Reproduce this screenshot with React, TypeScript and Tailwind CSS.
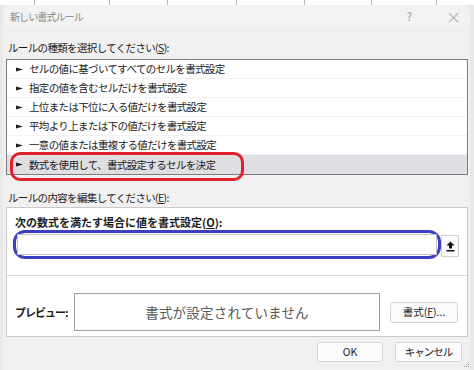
import React from 'react';

const rules = [
  'セルの値に基づいてすべてのセルを書式設定',
  '指定の値を含むセルだけを書式設定',
  '上位または下位に入る値だけを書式設定',
  '平均より上または下の値だけを書式設定',
  '一意の値または重複する値だけを書式設定',
  '数式を使用して、書式設定するセルを決定',
];

const colWidths = [35, 75, 58, 69, 68, 67, 65];

const Arrow = () => (
  <svg width="7" height="5" viewBox="0 0 7 5" className="shrink-0">
    <polygon points="0,0.5 7,2.5 0,4.5" fill="#1f1f1f" />
  </svg>
);

export default function App() {
  return (
    <div className="relative w-[474px] h-[370px] overflow-hidden bg-[#e8e8e8] font-['Noto_Sans_CJK_JP',sans-serif] text-[#1b1b1b]">
      {/* sheet behind the dialog */}
      <div className="flex h-[5px] bg-white">
        {colWidths.map((w, i) => (
          <div key={i} className="shrink-0 border-r border-[#bdbdbd]" style={{ width: w }} />
        ))}
      </div>

      <div className="ml-[3px] w-[467px] h-[365px] rounded-t-[8px] bg-[#f0f0f0] flex flex-col">
        {/* title bar */}
        <div className="flex items-center h-[22px] pl-[7px] rounded-t-[8px] bg-[#f2f2f2]">
          <span className="text-[10px] tracking-[-0.9px] text-[#8a8a8a]">新しい書式ルール</span>
          <span className="ml-auto text-[11px] text-[#9a9a9a]">?</span>
          <span className="ml-[34px] mr-[9px] text-[15px] font-light leading-none text-[#9a9a9a]">×</span>
        </div>

        <div className="mt-[14px] h-[14px] pl-[5px] flex items-center text-[10.5px] tracking-[-0.65px]">
          ルールの種類を選択してください(<span className="underline">S</span>):
        </div>

        {/* rule type list */}
        <div className="mt-[4px] ml-[3px] w-[462px] border border-[#7d7d7d] bg-white">
          {rules.map((r, i) => (
            <div
              key={r}
              className={
                'flex items-center gap-[6px] h-[19px] pl-[9px] text-[10.5px] tracking-[-0.65px] ' +
                (i === rules.length - 1 ? 'bg-[#dedee3]' : 'border-b border-[#f1f1f1]')
              }
            >
              <Arrow />
              <span>{r}</span>
            </div>
          ))}
        </div>

        <div className="mt-[16px] h-[14px] pl-[5px] flex items-center text-[10.5px] tracking-[-0.65px]">
          ルールの内容を編集してください(<span className="underline">E</span>):
        </div>

        {/* rule description panel */}
        <div className="mt-[2px] ml-[3px] w-[462px] border border-[#c9c9c9] bg-white flex flex-col">
          <div className="mt-[7px] h-[14px] pl-[8px] flex items-center text-[11px] font-bold">
            次の数式を満たす場合に値を書式設定(<span className="underline">O</span>):
          </div>
          <div className="mt-[1px] flex items-center">
            <div className="ml-[6px] w-[428px] h-[29px] rounded-[12px] border-[3.5px] border-[#3b3fc3] bg-white p-px">
              <div className="h-full w-full border border-[#c4c4c4] bg-white" />
            </div>
            <button className="mt-[3px] w-[18px] h-[22px] flex items-center justify-center border border-[#cfcfcf] bg-[#fbfbfb]">
              <svg width="9" height="11" viewBox="0 0 9 11">
                <polygon points="4.5,0.5 8.5,4.5 6,4.5 6,7.5 3,7.5 3,4.5 0.5,4.5" fill="#111" />
                <rect x="0.5" y="9" width="8" height="1.5" fill="#111" />
              </svg>
            </button>
          </div>
          <div className="mt-[16px] h-px bg-[#dcdcdc]" />
          <div className="mt-[17px] mb-[5px] flex items-center">
            <div className="w-[67px] pl-[8px] text-[11px] font-bold tracking-[-1px]">プレビュー:</div>
            <div className="w-[306px] h-[38px] border border-[#a0a0a0] flex items-center justify-center text-[13.5px] tracking-[0.2px] text-[#5a5a5a]">
              書式が設定されていません
            </div>
            <button className="ml-[10px] w-[68px] h-[21px] rounded-[3px] border border-[#d2d2d2] bg-[#fbfbfb] text-[10.5px] flex items-center justify-center">
              書式(<span className="underline">F</span>)...
            </button>
          </div>
        </div>

        {/* footer buttons */}
        <div className="mt-[5px] flex justify-end gap-[12px] pr-[8px]">
          <button className="w-[66px] h-[20px] rounded-[3px] border border-[#d6d6d6] bg-[#fbfbfb] text-[10.5px] flex items-center justify-center">
            OK
          </button>
          <button className="w-[67px] h-[20px] rounded-[3px] border border-[#d6d6d6] bg-[#fbfbfb] text-[10.5px] tracking-[-1px] flex items-center justify-center">
            キャンセル
          </button>
        </div>
      </div>

      {/* annotation around the selected rule */}
      <div className="absolute left-[10px] top-[152px] w-[234px] h-[29px] rounded-[10px] border-[3px] border-[#e0212b]" />

      {/* resize grip */}
      <svg className="absolute right-[4px] bottom-[2px]" width="7" height="7" viewBox="0 0 7 7">
        <rect x="5" y="1" width="1" height="1" fill="#9a9a9a" />
        <rect x="3" y="3" width="1" height="1" fill="#9a9a9a" />
        <rect x="5" y="3" width="1" height="1" fill="#9a9a9a" />
        <rect x="1" y="5" width="1" height="1" fill="#9a9a9a" />
        <rect x="3" y="5" width="1" height="1" fill="#9a9a9a" />
        <rect x="5" y="5" width="1" height="1" fill="#9a9a9a" />
      </svg>
    </div>
  );
}
